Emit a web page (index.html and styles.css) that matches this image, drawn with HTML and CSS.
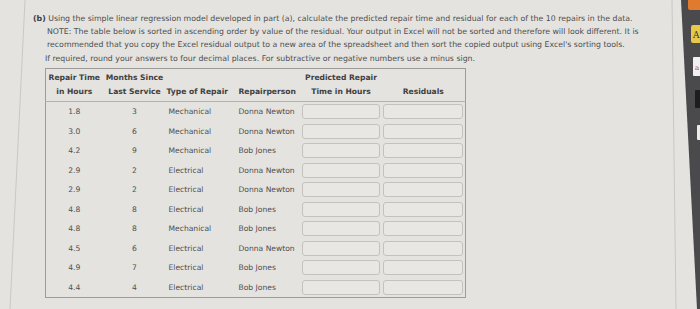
FILE: index.html
```html
<!DOCTYPE html>
<html>
<head>
<meta charset="utf-8">
<link rel="stylesheet" href="styles.css">
</head>
<body>
<div class="page">
  <div class="question">
    <p class="intro"><b class="part">(b)</b> Using the simple linear regression model developed in part (a), calculate the predicted repair time and residual for each of the 10 repairs in the data.<br>NOTE: The table below is sorted in ascending order by value of the residual. Your output in Excel will not be sorted and therefore will look different. It is<br>recommended that you copy the Excel residual output to a new area of the spreadsheet and then sort the copied output using Excel's sorting tools.</p>
    <p class="note">If required, round your answers to four decimal places. For subtractive or negative numbers use a minus sign.</p>
    <table class="data">
      <colgroup>
        <col class="c1"><col class="c2"><col class="c3"><col class="c4"><col class="c5"><col class="c6">
      </colgroup>
      <thead>
        <tr class="h1"><th>Repair Time</th><th>Months Since</th><th></th><th></th><th>Predicted Repair</th><th></th></tr>
        <tr class="h2"><th>in Hours</th><th>Last Service</th><th>Type of Repair</th><th>Repairperson</th><th>Time in Hours</th><th>Residuals</th></tr>
      </thead>
      <tbody>
        <tr><td class="num">1.8</td><td class="num">3</td><td class="txt">Mechanical</td><td class="txt">Donna Newton</td><td><div class="box"></div></td><td><div class="box"></div></td></tr>
        <tr><td class="num">3.0</td><td class="num">6</td><td class="txt">Mechanical</td><td class="txt">Donna Newton</td><td><div class="box"></div></td><td><div class="box"></div></td></tr>
        <tr><td class="num">4.2</td><td class="num">9</td><td class="txt">Mechanical</td><td class="txt">Bob Jones</td><td><div class="box"></div></td><td><div class="box"></div></td></tr>
        <tr><td class="num">2.9</td><td class="num">2</td><td class="txt">Electrical</td><td class="txt">Donna Newton</td><td><div class="box"></div></td><td><div class="box"></div></td></tr>
        <tr><td class="num">2.9</td><td class="num">2</td><td class="txt">Electrical</td><td class="txt">Donna Newton</td><td><div class="box"></div></td><td><div class="box"></div></td></tr>
        <tr><td class="num">4.8</td><td class="num">8</td><td class="txt">Electrical</td><td class="txt">Bob Jones</td><td><div class="box"></div></td><td><div class="box"></div></td></tr>
        <tr><td class="num">4.8</td><td class="num">8</td><td class="txt">Mechanical</td><td class="txt">Bob Jones</td><td><div class="box"></div></td><td><div class="box"></div></td></tr>
        <tr><td class="num">4.5</td><td class="num">6</td><td class="txt">Electrical</td><td class="txt">Donna Newton</td><td><div class="box"></div></td><td><div class="box"></div></td></tr>
        <tr><td class="num">4.9</td><td class="num">7</td><td class="txt">Electrical</td><td class="txt">Bob Jones</td><td><div class="box"></div></td><td><div class="box"></div></td></tr>
        <tr><td class="num">4.4</td><td class="num">4</td><td class="txt">Electrical</td><td class="txt">Bob Jones</td><td><div class="box"></div></td><td><div class="box"></div></td></tr>
      </tbody>
    </table>
  </div>
  <svg class="frame" width="700" height="309" viewBox="0 0 700 309" aria-hidden="true">
    <line x1="25" y1="0" x2="10" y2="309" stroke="#c9c8c4" stroke-width="1"/>
    <line x1="672" y1="0" x2="676" y2="309" stroke="#c8c7c3" stroke-width="1"/>
    <polygon points="681,0 700,0 700,309 697,309" fill="#4a4a4c"/>
    <rect x="688" y="-4" width="14" height="14" rx="2" fill="#e07a2e"/>
    <rect x="691" y="25" width="12" height="18" rx="2" fill="#e6c84a"/>
    <text x="693" y="38" font-family="DejaVu Serif, serif" font-size="9" fill="#333">A</text>
    <rect x="693" y="57" width="10" height="19" rx="1" fill="#f1efef"/>
    <text x="695" y="70" font-family="DejaVu Serif, serif" font-size="7" fill="#b03030">a</text>
    <rect x="695" y="90" width="8" height="18" rx="1" fill="#1d1d1f"/>
    <rect x="697" y="125" width="6" height="15" rx="1" fill="#ecebe9"/>
  </svg>
</div>
</body>
</html>
```

FILE: styles.css
```css
html, body {
  margin: 0;
  padding: 0;
  background: #e4e3df;
}

.page {
  position: relative;
  width: 700px;
  height: 309px;
  overflow: hidden;
  font-family: "DejaVu Sans", Verdana, sans-serif;
  font-size: 7.6px;
  color: #4e4e4e;
}

.question {
  padding-top: 12px;
  padding-left: 45px;
}

.intro {
  margin: 0;
  padding-left: 2px;
  text-indent: -14px;
  font-size: 7.8px;
  line-height: 13px;
  white-space: nowrap;
}

.part {
  color: #3e3e3e;
  font-weight: bold;
}

.note {
  margin: 1px 0 0 0;
  font-size: 7.8px;
  line-height: 13px;
  white-space: nowrap;
}

.data {
  margin-top: 3px;
  border-collapse: collapse;
  table-layout: fixed;
  width: 420px;
  border: 1px solid #9c9b98;
}

.c1 { width: 57px; }
.c2 { width: 64px; }
.c3 { width: 70px; }
.c4 { width: 64px; }
.c5 { width: 81px; }
.c6 { width: 84px; }

.data th {
  font-weight: bold;
  color: #404040;
  text-align: center;
  white-space: nowrap;
  padding: 0;
  line-height: 14px;
}

.data tr.h1 th {
  padding-top: 2px;
}

.data tr.h2 th {
  padding-bottom: 2px;
  border-bottom: 1px solid #b2b1ad;
}

.data tr.h2 th:nth-child(3),
.data tr.h2 th:nth-child(4) {
  text-align: left;
}

.data tr.h2 th:nth-child(3) { padding-left: 0; }
.data tr.h2 th:nth-child(4) { padding-left: 2px; }

.data td {
  height: 19.5px;
  padding: 0;
  white-space: nowrap;
}

.data td.num {
  text-align: center;
}

.data td.txt {
  padding-left: 2px;
}

.box {
  height: 13px;
  margin: 0 2px 0 1px;
  border: 1.5px solid #c3c2be;
  border-radius: 3px;
  background: #e8e7e3;
}

.frame {
  position: absolute;
  left: 0;
  top: 0;
  pointer-events: none;
}
```
